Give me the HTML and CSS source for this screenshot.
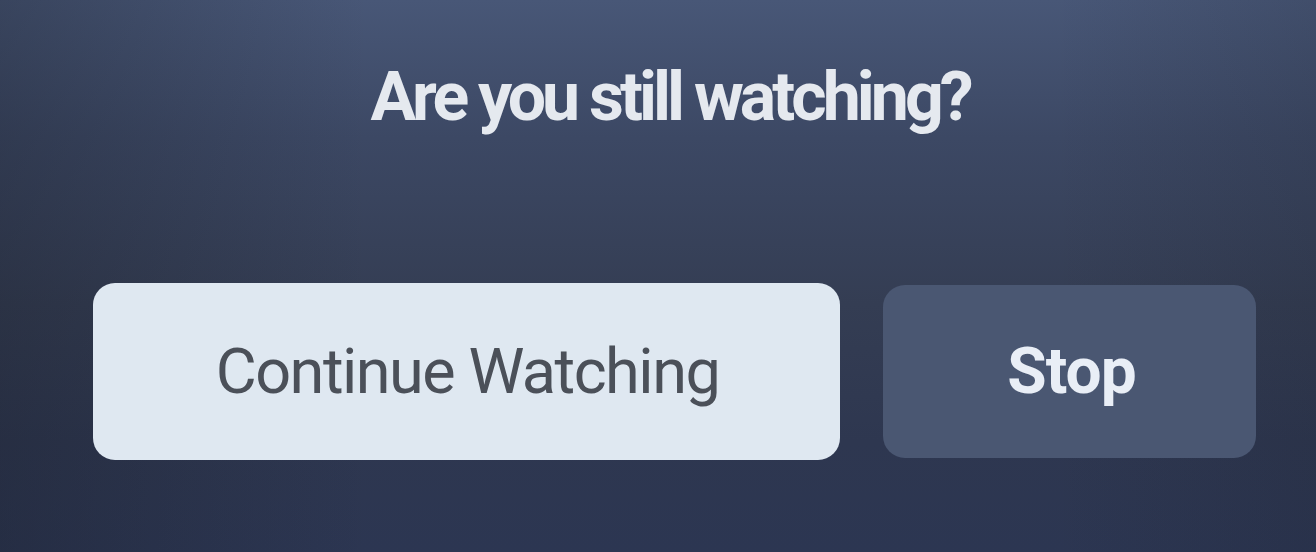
FILE: index.html
```html
<!DOCTYPE html>
<html lang="en">
<head>
    <meta charset="UTF-8">
    <meta name="viewport" content="width=device-width, initial-scale=1">
    <title>Are you still watching?</title>
    <link rel="stylesheet" href="styles.css">
</head>
<body>
    <div class="prompt">
        <h1 class="prompt-title">Are you still watching?</h1>
        <div class="prompt-actions">
            <button class="btn btn-continue">Continue Watching</button>
            <button class="btn btn-stop">Stop</button>
        </div>
    </div>
</body>
</html>
```

FILE: styles.css
```css
html, body {
    height: 100%;
    margin: 0;
}

body {
    font-family: Roboto, "Liberation Sans", sans-serif;
    background-color: #343e55;
    background-image:
        linear-gradient(90deg, rgba(22, 26, 36, 0.3) 0%, rgba(22, 26, 36, 0) 28%, rgba(22, 26, 36, 0) 80%, rgba(22, 26, 36, 0.15) 100%),
        linear-gradient(180deg, #485777 0%, #3c4864 25%, #343d53 55%, #2e3750 80%, #2c3652 100%);
    overflow: hidden;
}

.prompt {
    display: flex;
    flex-direction: column;
    padding: 57px 60px 0 93px;
}

.prompt-title {
    margin: 0 0 146px 0;
    padding-right: 9px;
    text-align: center;
    font-size: 68px;
    line-height: 80px;
    font-weight: 700;
    letter-spacing: -4px;
    color: #e5e9ef;
}

.prompt-actions {
    display: flex;
    align-items: center;
    gap: 43px;
}

.btn {
    display: flex;
    align-items: center;
    justify-content: center;
    border: none;
    border-radius: 22px;
    font-family: Roboto, "Liberation Sans", sans-serif;
    cursor: pointer;
}

.btn-continue {
    width: 747px;
    height: 177px;
    padding: 0 0 0 2px;
    background-color: #dfe8f1;
    color: #4b5059;
    font-size: 63px;
    font-weight: 400;
    letter-spacing: -1.5px;
}

.btn-stop {
    width: 373px;
    height: 173px;
    padding: 0 0 0 4px;
    background-color: #4a5772;
    color: #e9eef6;
    font-size: 64px;
    font-weight: 700;
    letter-spacing: -1px;
}
```
